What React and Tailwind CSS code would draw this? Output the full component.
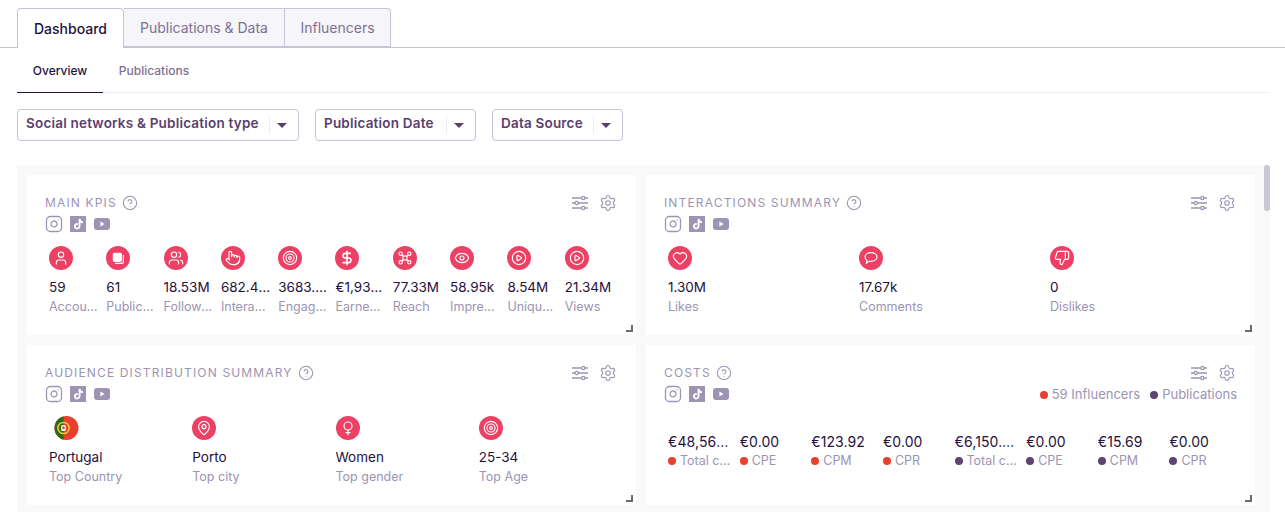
import { Heart, ThumbsDown, MapPin, Venus, Eye, CirclePlay, Target, DollarSign, Users, User, Pointer, Settings, CircleHelp, Instagram } from 'lucide-react';

const CopyIcon = (props) => (
  <svg viewBox="0 0 24 24" fill="none" stroke="currentColor" strokeWidth="1.6" {...props}>
    <rect x="5" y="5" width="12" height="12" rx="1.5" fill="currentColor" />
    <path d="M20 8v10a2 2 0 0 1-2 2H8" strokeLinecap="round" />
  </svg>
);

const ReachIcon = (props) => (
  <svg viewBox="0 0 24 24" fill="none" stroke="currentColor" strokeWidth="1.8" {...props}>
    <rect x="9" y="9" width="6" height="6" />
    <circle cx="5.5" cy="5.5" r="2.5" />
    <circle cx="18.5" cy="5.5" r="2.5" />
    <circle cx="5.5" cy="18.5" r="2.5" />
    <circle cx="18.5" cy="18.5" r="2.5" />
    <path d="M7.5 7.5 9.5 9.5M16.5 7.5l-2 2M7.5 16.5l2-2M16.5 16.5l-2-2" />
  </svg>
);

const BubbleIcon = (props) => (
  <svg viewBox="0 0 24 24" fill="none" stroke="currentColor" strokeWidth="1.8" strokeLinejoin="round" {...props}>
    <path d="M12 4c5 0 9 2.7 9 6.5S17 17 12 17c-.9 0-1.8-.1-2.600-.3L5 20l.8-4.700C4 14 3 12.400 3 10.500 3 6.700 7 4 12 4z" />
  </svg>
);

const SlidersIcon = (props) => (
  <svg viewBox="0 0 16 16" fill="none" stroke="currentColor" strokeWidth="1.3" {...props}>
    <path d="M0 3h9.600M13 3h3M0 8h3M6.400 8H16M0 13h9.600M13 13h3" />
    <circle cx="11.3" cy="3" r="1.6" />
    <circle cx="4.7" cy="8" r="1.6" />
    <circle cx="11.3" cy="13" r="1.6" />
  </svg>
);

const TiktokIcon = (props) => (
  <svg viewBox="0 0 16 16" {...props}>
    <rect width="16" height="16" fill="#9c94b2" />
    <path d="M8.600 2.800h1.900c.1 1.400 1 2.400 2.400 2.500v1.900c-.9 0-1.700-.3-2.400-.8v3.700c0 2-1.500 3.300-3.300 3.300-1.900 0-3.300-1.400-3.300-3.200 0-2 1.700-3.500 3.800-3.200v2c-1-.2-1.800.4-1.800 1.200 0 .8.6 1.300 1.300 1.300.8 0 1.400-.5 1.400-1.500z" fill="#fff" />
  </svg>
);

const YoutubeIcon = (props) => (
  <svg viewBox="0 0 16 12" {...props}>
    <rect width="16" height="12" rx="3" fill="#9c94b2" />
    <path d="M6.400 3.600 10.600 6l-4.200 2.400z" fill="#fff" />
  </svg>
);

const PortugalFlag = () => (
  <svg viewBox="0 0 25 24" className="w-[25px] h-6">
    <defs>
      <clipPath id="flag-circle">
        <circle cx="12.5" cy="12" r="12" />
      </clipPath>
    </defs>
    <g clipPath="url(#flag-circle)">
      <rect width="25" height="24" fill="#ea3f2e" />
      <rect width="9.5" height="24" fill="#2f6a12" />
      <circle cx="9.5" cy="12" r="5.6" fill="none" stroke="#e3d33f" strokeWidth="1.5" />
      <rect x="7" y="9" width="5" height="6" rx="1.5" fill="#e9e4dc" />
      <rect x="8.5" y="10.500" width="2" height="2.500" fill="#c9473c" />
    </g>
  </svg>
);

const kpis = [
  { icon: User, value: '59', label: 'Accounts' },
  { icon: CopyIcon, value: '61', label: 'Publications' },
  { icon: Users, value: '18.53M', label: 'Followers' },
  { icon: Pointer, value: '682.48k', label: 'Interactions' },
  { icon: Target, value: '3683.21%', label: 'Engagement' },
  { icon: DollarSign, value: '€1,934.22', label: 'Earned Media', bold: true },
  { icon: ReachIcon, value: '77.33M', label: 'Reach' },
  { icon: Eye, value: '58.95k', label: 'Impressions' },
  { icon: CirclePlay, value: '8.54M', label: 'Unique Views' },
  { icon: CirclePlay, value: '21.34M', label: 'Views' },
];

const interactions = [
  { icon: Heart, value: '1.30M', label: 'Likes' },
  { icon: BubbleIcon, value: '17.67k', label: 'Comments' },
  { icon: ThumbsDown, value: '0', label: 'Dislikes' },
];

const audience = [
  { flag: true, value: 'Portugal', label: 'Top Country' },
  { icon: MapPin, value: 'Porto', label: 'Top city' },
  { icon: Venus, value: 'Women', label: 'Top gender' },
  { icon: Target, value: '25-34', label: 'Top Age' },
];

const costs = [
  { value: '€48,567.12', label: 'Total cost', dot: 'bg-[#ea3f2e]' },
  { value: '€0.00', label: 'CPE', dot: 'bg-[#ea3f2e]' },
  { value: '€123.92', label: 'CPM', dot: 'bg-[#ea3f2e]' },
  { value: '€0.00', label: 'CPR', dot: 'bg-[#ea3f2e]' },
  { value: '€6,150.34', label: 'Total cost', dot: 'bg-[#5f4370]' },
  { value: '€0.00', label: 'CPE', dot: 'bg-[#5f4370]' },
  { value: '€15.69', label: 'CPM', dot: 'bg-[#5f4370]' },
  { value: '€0.00', label: 'CPR', dot: 'bg-[#5f4370]' },
];

function Metric({ item }) {
  const Icon = item.icon;
  return (
    <div className="min-w-0 pr-[7px]">
      <div className="h-6">
        {item.flag ? (
          <div className="pl-[5px]"><PortugalFlag /></div>
        ) : (
          <div className="w-6 h-6 rounded-full bg-[#ec4064] flex items-center justify-center text-white">
            <Icon className="w-4 h-4" strokeWidth={item.bold ? 2.4 : 1.7} />
          </div>
        )}
      </div>
      <div className="mt-[9px] text-[13.5px] leading-[17px] text-[#25113c] truncate">{item.value}</div>
      <div className="mt-[3px] text-[12.5px] leading-[16px] text-[#9c94b2] truncate">{item.label}</div>
    </div>
  );
}

function CostMetric({ item }) {
  return (
    <div className="min-w-0 pr-[9px]">
      <div className="text-[14px] tracking-[0.1px] leading-[17px] text-[#25113c] truncate">{item.value}</div>
      <div className="mt-[3px] flex items-center gap-[4px] text-[12.5px] leading-[16px] text-[#9c94b2]">
        <span className={`w-2 h-2 rounded-full shrink-0 ${item.dot}`} />
        <span className="truncate">{item.label}</span>
      </div>
    </div>
  );
}

function Card({ title, legend, children }) {
  return (
    <div className="relative bg-white h-[160px] pt-5 pl-[18px]">
      <div className="flex items-start justify-between pr-[19px]">
        <div>
          <div className="flex items-center gap-[5px] h-[15px] text-[12px] tracking-[1.15px] text-[#9c94b2] uppercase">
            {title}
            <CircleHelp className="w-4 h-4" strokeWidth={1.6} />
          </div>
          <div className="flex items-center mt-[5px] text-[#9c94b2]">
            <Instagram className="w-[18px] h-[18px]" strokeWidth={1.7} />
            <TiktokIcon className="w-4 h-4 ml-[7px]" />
            <YoutubeIcon className="w-4 h-3 ml-2" />
          </div>
        </div>
        <div className="flex flex-col items-end -mt-px">
          <div className="flex items-center gap-[11px] text-[#9c94b2]">
            <SlidersIcon className="w-4 h-4" />
            <Settings className="w-[18px] h-[18px]" strokeWidth={1.5} />
          </div>
          {legend && (
            <div className="flex items-center gap-[10px] -mr-px mt-[5px] h-[15px] text-[13px] text-[#9c94b2]">
              <span className="flex items-center gap-[4px]">
                <span className="w-2 h-2 rounded-full bg-[#ea3f2e]" />59 Influencers
              </span>
              <span className="flex items-center gap-[4px]">
                <span className="w-2 h-2 rounded-full bg-[#5f4370]" />Publications
              </span>
            </div>
          )}
        </div>
      </div>
      {children}
      <span className="absolute right-[3px] bottom-[3px] w-[7px] h-[7px] border-r-2 border-b-2 border-[#6b6b6b]" />
    </div>
  );
}

function Filter({ label, width }) {
  return (
    <div className={`flex items-center h-8 pl-2 pb-[3px] bg-white border border-[#c9c3da] rounded text-[13.5px] font-semibold tracking-[0.2px] text-[#5a3f6e] ${width}`}>
      <span className="flex-1 whitespace-nowrap">{label}</span>
      <span className="w-px h-[18px] mt-[3px] bg-[#ececf2]" />
      <span className="w-[28px] mt-[3px] flex justify-center pr-[5px]">
        <span className="border-x-[5px] border-x-transparent border-t-[5px] border-t-[#5a3f6e]" />
      </span>
    </div>
  );
}

export default function App() {
  return (
    <div className="h-[512px] overflow-hidden bg-white" style={{ fontFamily: 'Inter, "Noto Sans", sans-serif' }}>
      {/* Top tabs */}
      <div className="flex h-12 pt-2 pl-[17px] border-b border-[#c9c3da] text-[14px]">
        <div className="w-[107px] h-10 flex items-center justify-center bg-white border border-b-0 border-[#c9c3da] rounded-t font-medium text-[#25113c]">Dashboard</div>
        <div className="w-[161px] h-[39px] flex items-center justify-center bg-[#f6f5fa] border-y border-r border-[#c9c3da] text-[#7d7194]">Publications &amp; Data</div>
        <div className="w-[106px] h-[39px] flex items-center justify-center bg-[#f6f5fa] border-y border-r border-[#c9c3da] rounded-tr text-[#7d7194]">Influencers</div>
      </div>

      {/* Sub tabs */}
      <div className="flex h-[45px] mx-[17px] border-b border-[#ececf2] text-[12px] font-medium">
        <div className="w-[86px] flex items-center justify-center -mb-px pt-[2px] border-b border-[#25113c] text-[#25113c]">Overview</div>
        <div className="w-[102px] flex items-center justify-center pt-[2px] text-[#7d7194]">Publications</div>
      </div>

      {/* Filters */}
      <div className="flex gap-4 mx-[17px] mt-4">
        <Filter label="Social networks & Publication type" width="w-[282px]" />
        <Filter label="Publication Date" width="w-[161px]" />
        <Filter label="Data Source" width="w-[131px]" />
      </div>

      {/* Widgets */}
      <div className="relative w-[1253px] mt-6 ml-[17px] h-[400px] bg-[#f9f9f9] pt-[10px] pl-[10px] pr-[15px]">
        <div className="grid grid-cols-2 gap-[10px]">
          <Card title="Main KPIs">
            <div className="grid grid-cols-10 w-[573px] ml-1 mt-[13px]">
              {kpis.map((item) => <Metric key={item.label} item={item} />)}
            </div>
          </Card>
          <Card title="Interactions Summary">
            <div className="grid grid-cols-3 w-[573px] ml-1 mt-[13px]">
              {interactions.map((item) => <Metric key={item.label} item={item} />)}
            </div>
          </Card>
          <Card title="Audience distribution summary">
            <div className="grid grid-cols-4 w-[573px] ml-1 mt-[13px]">
              {audience.map((item) => <Metric key={item.label} item={item} />)}
            </div>
          </Card>
          <Card title="Costs" legend>
            <div className="grid grid-cols-8 w-[573px] ml-1 mt-[30px]">
              {costs.map((item, i) => <CostMetric key={i} item={item} />)}
            </div>
          </Card>
        </div>
        <span className="absolute top-0 right-0 w-[6px] h-[46px] rounded-full bg-[#c9c8d6]" />
      </div>
    </div>
  );
}
